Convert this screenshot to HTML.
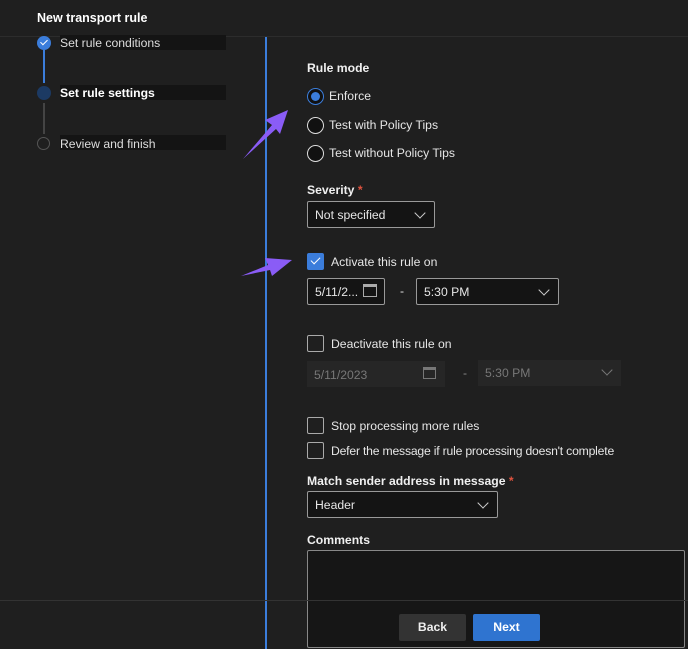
<!DOCTYPE html>
<html><head><style>
*{margin:0;padding:0;box-sizing:border-box}
body{width:688px;height:649px;background:#1f1f1f;font-family:"Liberation Sans",sans-serif;color:#e6e6e6;position:relative;overflow:hidden;font-size:12.2px}
.a{position:absolute}
.lbl{font-weight:bold;font-size:12.2px;color:#f0f0f0}
.radio{width:17px;height:17px;border:1.5px solid #ddd;border-radius:50%;background:#111}
.cb{width:17px;height:17px;border:1.3px solid #aaa;border-radius:2px}
.box{border:1px solid #999;background:#141414;border-radius:2px}
.chev{position:absolute;width:8px;height:8px;border-right:1.3px solid #ccc;border-bottom:1.3px solid #ccc;transform:rotate(45deg)}
.star{color:#e0533f}
</style></head><body>
<div class="a" style="left:37px;top:11px;font-weight:bold;font-size:12.5px;color:#fff">New transport rule</div>
<div class="a" style="left:0;top:36px;width:688px;height:1px;background:#2c2c2c"></div>
<div class="a" style="left:60px;top:35px;width:166px;height:15px;background:#141414"></div>
<div class="a" style="left:60px;top:85px;width:166px;height:15px;background:#141414"></div>
<div class="a" style="left:60px;top:135px;width:166px;height:15px;background:#141414"></div>
<div class="a" style="left:37px;top:36px;width:14px;height:14px;border-radius:50%;background:#3b7ddb"></div>
<div class="a" style="left:42px;top:38px;width:4px;height:7px;border-right:1.5px solid #fff;border-bottom:1.5px solid #fff;transform:rotate(45deg)"></div>
<div class="a" style="left:43px;top:50px;width:1.5px;height:33px;background:#3b7ddb"></div>
<div class="a" style="left:37px;top:86px;width:14px;height:14px;border-radius:50%;background:#1c3a63"></div>
<div class="a" style="left:43px;top:103px;width:1.5px;height:31px;background:#444"></div>
<div class="a" style="left:37px;top:137px;width:13px;height:13px;border-radius:50%;border:1.5px solid #555"></div>
<div class="a" style="left:60px;top:36px;color:#ddd">Set rule conditions</div>
<div class="a" style="left:60px;top:86px;font-weight:bold;color:#fff">Set rule settings</div>
<div class="a" style="left:60px;top:137px;color:#ddd">Review and finish</div>
<div class="a" style="left:265px;top:37px;width:2px;height:612px;background:#3b7ddb"></div>
<svg class="a" style="left:0;top:0" width="688" height="649">
<path d="M243 159 L272 125 L265 120 L288 110 L280 134 L276 129 Z" fill="#8a5cf6"/>
<path d="M241 276 L268 265 L265 258 L292 260 L272 276 L270 270 Z" fill="#8a5cf6"/>
</svg>
<div class="a lbl" style="left:307px;top:61px">Rule mode</div>
<div class="a radio" style="left:307px;top:88px;border-color:#3b7ddb"></div>
<div class="a" style="left:311px;top:92px;width:9px;height:9px;border-radius:50%;background:#3b7ddb"></div>
<div class="a" style="left:329px;top:89px">Enforce</div>
<div class="a radio" style="left:307px;top:117px"></div>
<div class="a" style="left:329px;top:118px">Test with Policy Tips</div>
<div class="a radio" style="left:307px;top:145px"></div>
<div class="a" style="left:329px;top:146px">Test without Policy Tips</div>
<div class="a lbl" style="left:307px;top:183px">Severity <span class="star">*</span></div>
<div class="a box" style="left:307px;top:201px;width:128px;height:27px"><span class="a" style="left:7px;top:6px">Not specified</span><div class="chev" style="right:10px;top:7px"></div></div>
<div class="a" style="left:307px;top:253px;width:17px;height:17px;background:#3b7ddb;border-radius:2px"></div>
<div class="a" style="left:313px;top:255px;width:5px;height:9px;border-right:1.5px solid #fff;border-bottom:1.5px solid #fff;transform:rotate(45deg)"></div>
<div class="a" style="left:331px;top:255px">Activate this rule on</div>
<div class="a box" style="left:307px;top:278px;width:78px;height:27px"><span class="a" style="left:7px;top:6px">5/11/2...</span><span class="a" style="left:55px;top:5px;width:14px;height:13px;border:1px solid #aaa;border-top:3px solid #aaa"></span></div>
<div class="a" style="left:400px;top:284px">-</div>
<div class="a box" style="left:416px;top:278px;width:143px;height:27px"><span class="a" style="left:7px;top:6px">5:30 PM</span><div class="chev" style="right:10px;top:7px"></div></div>
<div class="a cb" style="left:307px;top:335px"></div>
<div class="a" style="left:331px;top:337px">Deactivate this rule on</div>
<div class="a" style="left:307px;top:361px;width:138px;height:26px;background:#262626"><span class="a" style="left:7px;top:7px;color:#777">5/11/2023</span><span class="a" style="left:116px;top:6px;width:13px;height:12px;border:1px solid #777;border-top:3px solid #777"></span></div>
<div class="a" style="left:463px;top:366px;color:#888">-</div>
<div class="a" style="left:478px;top:360px;width:143px;height:26px;background:#262626"><span class="a" style="left:7px;top:6px;color:#777">5:30 PM</span><div class="chev" style="right:10px;top:6px;border-color:#777"></div></div>
<div class="a cb" style="left:307px;top:417px"></div>
<div class="a" style="left:331px;top:419px">Stop processing more rules</div>
<div class="a cb" style="left:307px;top:442px"></div>
<div class="a" style="left:331px;top:444px;letter-spacing:-0.2px">Defer the message if rule processing doesn't complete</div>
<div class="a lbl" style="left:307px;top:474px">Match sender address in message <span class="star">*</span></div>
<div class="a box" style="left:307px;top:491px;width:191px;height:27px"><span class="a" style="left:7px;top:6px">Header</span><div class="chev" style="right:10px;top:7px"></div></div>
<div class="a lbl" style="left:307px;top:533px">Comments</div>
<div class="a" style="left:307px;top:550px;width:378px;height:98px;border:1px solid #888;background:#161616;border-radius:2px"></div>
<div class="a" style="left:0;top:600px;width:688px;height:1px;background:#333"></div>
<div class="a" style="left:399px;top:614px;width:67px;height:27px;background:#333;border-radius:2px;text-align:center;line-height:27px;font-weight:bold;color:#eee">Back</div>
<div class="a" style="left:473px;top:614px;width:67px;height:27px;background:#2f74d0;border-radius:2px;text-align:center;line-height:27px;font-weight:bold;color:#fff">Next</div>
</body></html>
